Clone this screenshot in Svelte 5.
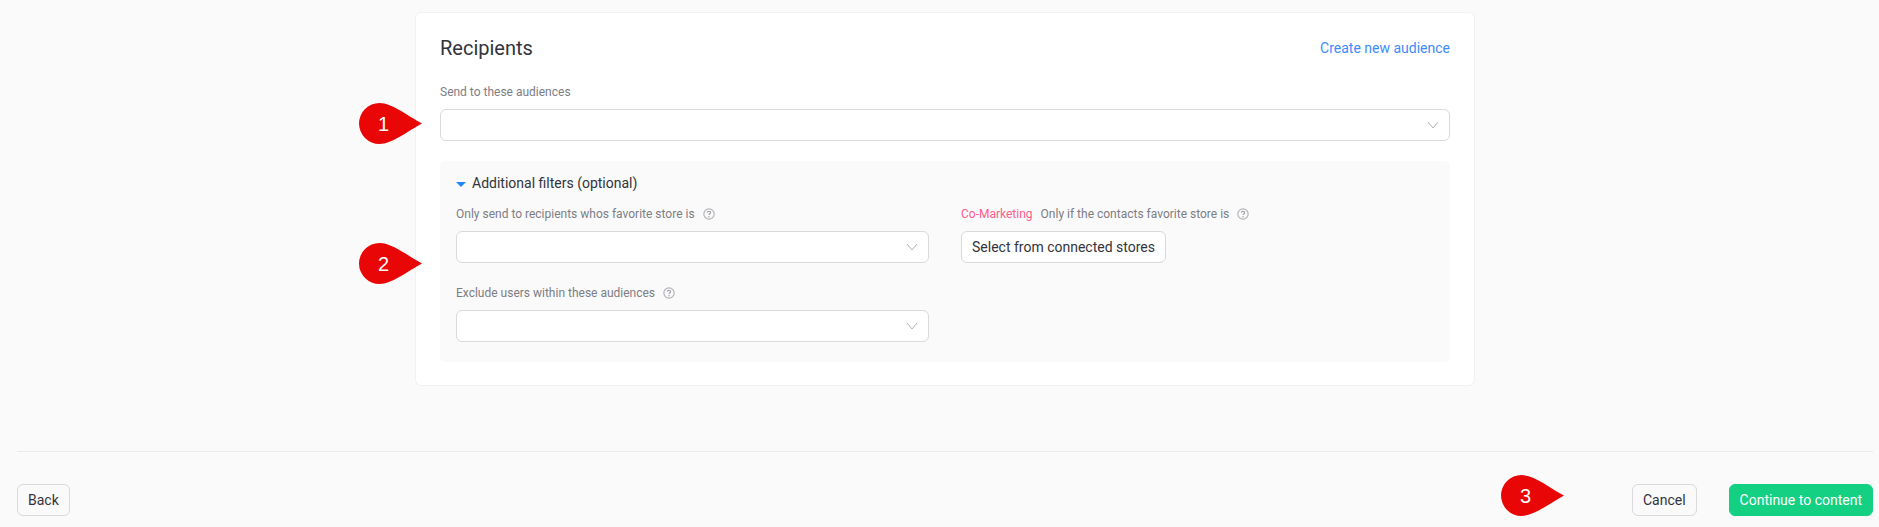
<script lang="ts">
  const markers = [
    { id: 1, cls: "m1" },
    { id: 2, cls: "m2" },
    { id: 3, cls: "m3" },
  ];
</script>

{#snippet chevron()}
  <svg class="chevron" viewBox="0 0 12 8" fill="none" stroke="currentColor" stroke-width="1">
    <path d="M1 1 6 7 11 1" />
  </svg>
{/snippet}

{#snippet help()}
  <svg class="help" viewBox="0 0 13 13" fill="none">
    <circle cx="6.5" cy="6.5" r="5.6" stroke="#b4b4bc" stroke-width="1.3" />
    <path d="M4.7 5.2c0-1 .8-1.6 1.8-1.6s1.8.6 1.8 1.5c0 1.2-1.8 1.1-1.8 2.4" stroke="#9a9aa2" stroke-width="1.1" />
    <circle cx="6.5" cy="9.5" r="0.7" fill="#9a9aa2" />
  </svg>
{/snippet}

<div class="page">
  <section class="card">
    <header class="card-head">
      <h2>Recipients</h2>
      <span class="link">Create new audience</span>
    </header>

    <div class="label top-label">Send to these audiences</div>
    <div class="select">{@render chevron()}</div>

    <div class="filters">
      <div class="filters-title">
        <span class="caret"></span>
        Additional filters (optional)
      </div>
      <div class="filter-grid">
        <div class="col">
          <div class="label">Only send to recipients whos favorite store is{@render help()}</div>
          <div class="select">{@render chevron()}</div>
          <div class="label second">Exclude users within these audiences{@render help()}</div>
          <div class="select">{@render chevron()}</div>
        </div>
        <div class="col">
          <div class="label"><span class="pink">Co-Marketing</span>Only if the contacts favorite store is{@render help()}</div>
          <div><span class="btn">Select from connected stores</span></div>
        </div>
      </div>
    </div>
  </section>

  <footer class="footer">
    <span class="btn">Back</span>
    <div class="footer-right">
      <span class="btn">Cancel</span>
      <span class="btn primary">Continue to content</span>
    </div>
  </footer>

  {#each markers as m}
    <div class="marker {m.cls}">
      <svg width="63" height="41" viewBox="0 0 63 41">
        <path d="M20.5 0C33 0 49 13 63 20.5C49 28 33 41 20.5 41A20.5 20.5 0 0 1 20.5 0Z" fill="#e90606" />
      </svg>
      <span>{m.id}</span>
    </div>
  {/each}
</div>

<style>
  :global(body) {
    margin: 0;
    background: #fafafa;
  }

  .page {
    position: relative;
    height: 527px;
    box-sizing: border-box;
    padding-top: 12px;
    overflow: hidden;
    font-family: Roboto, "Liberation Sans", sans-serif;
    font-size: 14px;
    color: #33333b;
  }

  .card {
    box-sizing: border-box;
    width: 1060px;
    height: 374px;
    margin-left: 415px;
    padding: 0 24px;
    background: #fff;
    border: 1px solid #f0f0f5;
    border-radius: 6px;
  }

  .card-head {
    display: flex;
    justify-content: space-between;
    align-items: center;
    height: 71px;
    padding-bottom: 2px;
    box-sizing: border-box;
  }

  h2 {
    margin: 0;
    font-size: 20px;
    font-weight: 400;
  }

  .link {
    font-size: 14px;
    color: #3d8bfd;
  }

  .label {
    display: flex;
    align-items: center;
    height: 14px;
    font-size: 12px;
    color: #7d7d85;
    white-space: pre;
  }

  .top-label {
    margin-top: 1px;
    margin-bottom: 10px;
  }

  .pink {
    color: #ff5c8a;
    margin-right: 8px;
  }

  .select {
    display: flex;
    align-items: center;
    justify-content: flex-end;
    box-sizing: border-box;
    height: 32px;
    padding-right: 10px;
    background: #fff;
    border: 1px solid #d9d9de;
    border-radius: 6px;
    color: #b3b3ba;
  }

  .chevron {
    width: 12px;
    height: 8px;
  }

  .help {
    width: 12px;
    height: 12px;
    margin-left: 8px;
  }

  .filters {
    box-sizing: border-box;
    height: 201px;
    margin-top: 20px;
    padding: 13px 16px 14px;
    background: #fafafa;
    border-radius: 6px;
  }

  .filters-title {
    display: flex;
    align-items: center;
    gap: 6px;
    height: 18px;
    font-size: 14px;
  }

  .caret {
    width: 0;
    height: 0;
    margin-top: 2px;
    border-left: 5px solid transparent;
    border-right: 5px solid transparent;
    border-top: 5px solid #1e88f5;
  }

  .filter-grid {
    display: grid;
    grid-template-columns: 473px 1fr;
    gap: 32px;
    margin-top: 15px;
  }

  .col > .label {
    margin-bottom: 10px;
  }

  .col > .label.second {
    margin-top: 23px;
    margin-bottom: 10px;
  }

  .btn {
    display: inline-flex;
    align-items: center;
    justify-content: center;
    box-sizing: border-box;
    height: 32px;
    padding: 0 10px;
    background: transparent;
    border: 1px solid #d9d9de;
    border-radius: 6px;
    font-size: 14px;
    color: #33333b;
  }

  .filters .btn {
    background: #fff;
  }

  .btn.primary {
    background: #13d082;
    border-color: #13d082;
    color: #fff;
  }

  .footer {
    display: flex;
    justify-content: space-between;
    margin: 65px 6px 0 17px;
    padding-top: 32px;
    border-top: 1px solid #ebebeb;
  }

  .footer-right {
    display: flex;
    gap: 32px;
  }

  .marker {
    position: absolute;
    display: flex;
    height: 41px;
  }

  .marker span {
    position: absolute;
    left: 19px;
    top: 9px;
    font-family: "Liberation Sans", Arial, sans-serif;
    font-size: 20px;
    line-height: 24px;
    color: #fff;
  }

  .m1 { left: 359px; top: 103px; }
  .m2 { left: 359px; top: 243px; }
  .m3 { left: 1501px; top: 475px; }
</style>
